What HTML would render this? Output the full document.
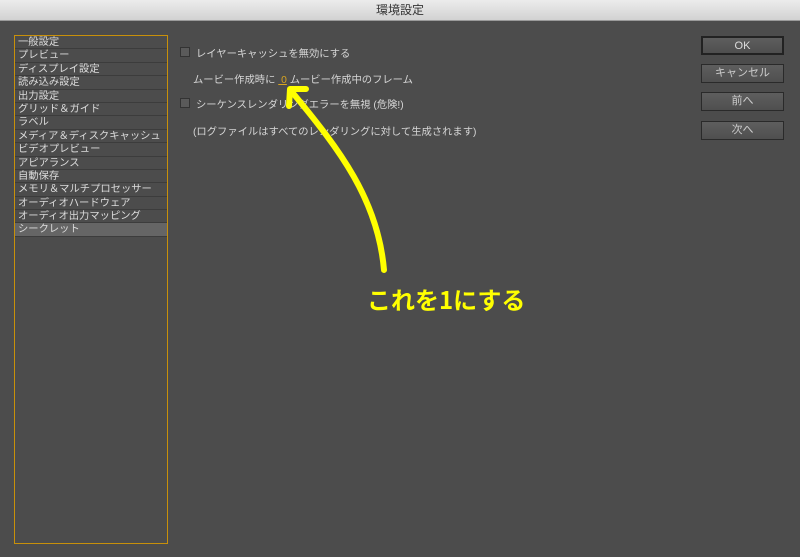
<!DOCTYPE html>
<html><head><meta charset="utf-8"><style>
*{margin:0;padding:0;box-sizing:border-box}
body{width:800px;height:557px;background:#4c4c4c;font-family:"Liberation Sans","Noto Sans CJK JP",sans-serif;color:#d8d8d8;position:relative;overflow:hidden;font-size:11px}
.title{position:absolute;left:0;top:0;width:800px;height:21px;background:linear-gradient(#ececec,#d2d2d2);border-bottom:1px solid #9a9a9a;text-align:center;color:#333;font-size:12px;line-height:21px}
.list{position:absolute;left:14px;top:35px;width:154px;height:509px;border:1px solid #c8900a;background:#4c4c4c}
.row{height:13.4px;line-height:13px;padding-left:3px;border-bottom:1px solid #3c3c3c;font-size:10.3px;white-space:nowrap;overflow:hidden;color:#dcdcdc}
.sel{background:#656565}
.t{position:absolute;font-size:10.3px;white-space:nowrap;color:#d6d6d6}
.cb{position:absolute;width:10px;height:10px;border:1px solid #333;background:#5a5a5a}
.btn{position:absolute;left:701px;width:83px;height:19px;border:1px solid #2a2a2a;background:linear-gradient(#5e5e5e,#4f4f4f);text-align:center;line-height:17px;font-size:11px;color:#ccc}
</style></head><body>
<div class="title">環境設定</div>
<div class="list">
<div class="row">一般設定</div><div class="row">プレビュー</div><div class="row">ディスプレイ設定</div><div class="row">読み込み設定</div><div class="row">出力設定</div><div class="row">グリッド＆ガイド</div><div class="row">ラベル</div><div class="row">メディア＆ディスクキャッシュ</div><div class="row">ビデオプレビュー</div><div class="row">アピアランス</div><div class="row">自動保存</div><div class="row">メモリ＆マルチプロセッサー</div><div class="row">オーディオハードウェア</div><div class="row">オーディオ出力マッピング</div><div class="row sel">シークレット</div>
</div>
<div class="cb" style="left:180px;top:47px"></div>
<div class="t" style="left:196px;top:45px">レイヤーキャッシュを無効にする</div>
<div class="t" style="left:193px;top:71px">ムービー作成時に <span style="color:#d9a520;text-decoration:underline">&nbsp;0</span> ムービー作成中のフレーム</div>
<div class="cb" style="left:180px;top:98px"></div>
<div class="t" style="left:196px;top:96px">シーケンスレンダリングエラーを無視 (危険!)</div>
<div class="t" style="left:193px;top:123px">(ログファイルはすべてのレンダリングに対して生成されます)</div>
<div class="btn" style="top:36px;border:2px solid #222;color:#ddd">OK</div>
<div class="btn" style="top:64px">キャンセル</div>
<div class="btn" style="top:92px">前へ</div>
<div class="btn" style="top:121px">次へ</div>
<svg style="position:absolute;left:0;top:0" width="800" height="557">
<path d="M384 270 C378 200 340 150 292 92" stroke="#ffff00" stroke-width="6" fill="none" stroke-linecap="round"/>
<path d="M306 89 L290 89 L289 106" stroke="#ffff00" stroke-width="6" fill="none" stroke-linecap="round" stroke-linejoin="round"/>
</svg>
<div style="position:absolute;left:367px;top:281px;font-size:24px;font-weight:bold;color:#ffff00;white-space:nowrap;font-family:'Noto Sans CJK JP',sans-serif">これを1にする</div>
</body></html>
